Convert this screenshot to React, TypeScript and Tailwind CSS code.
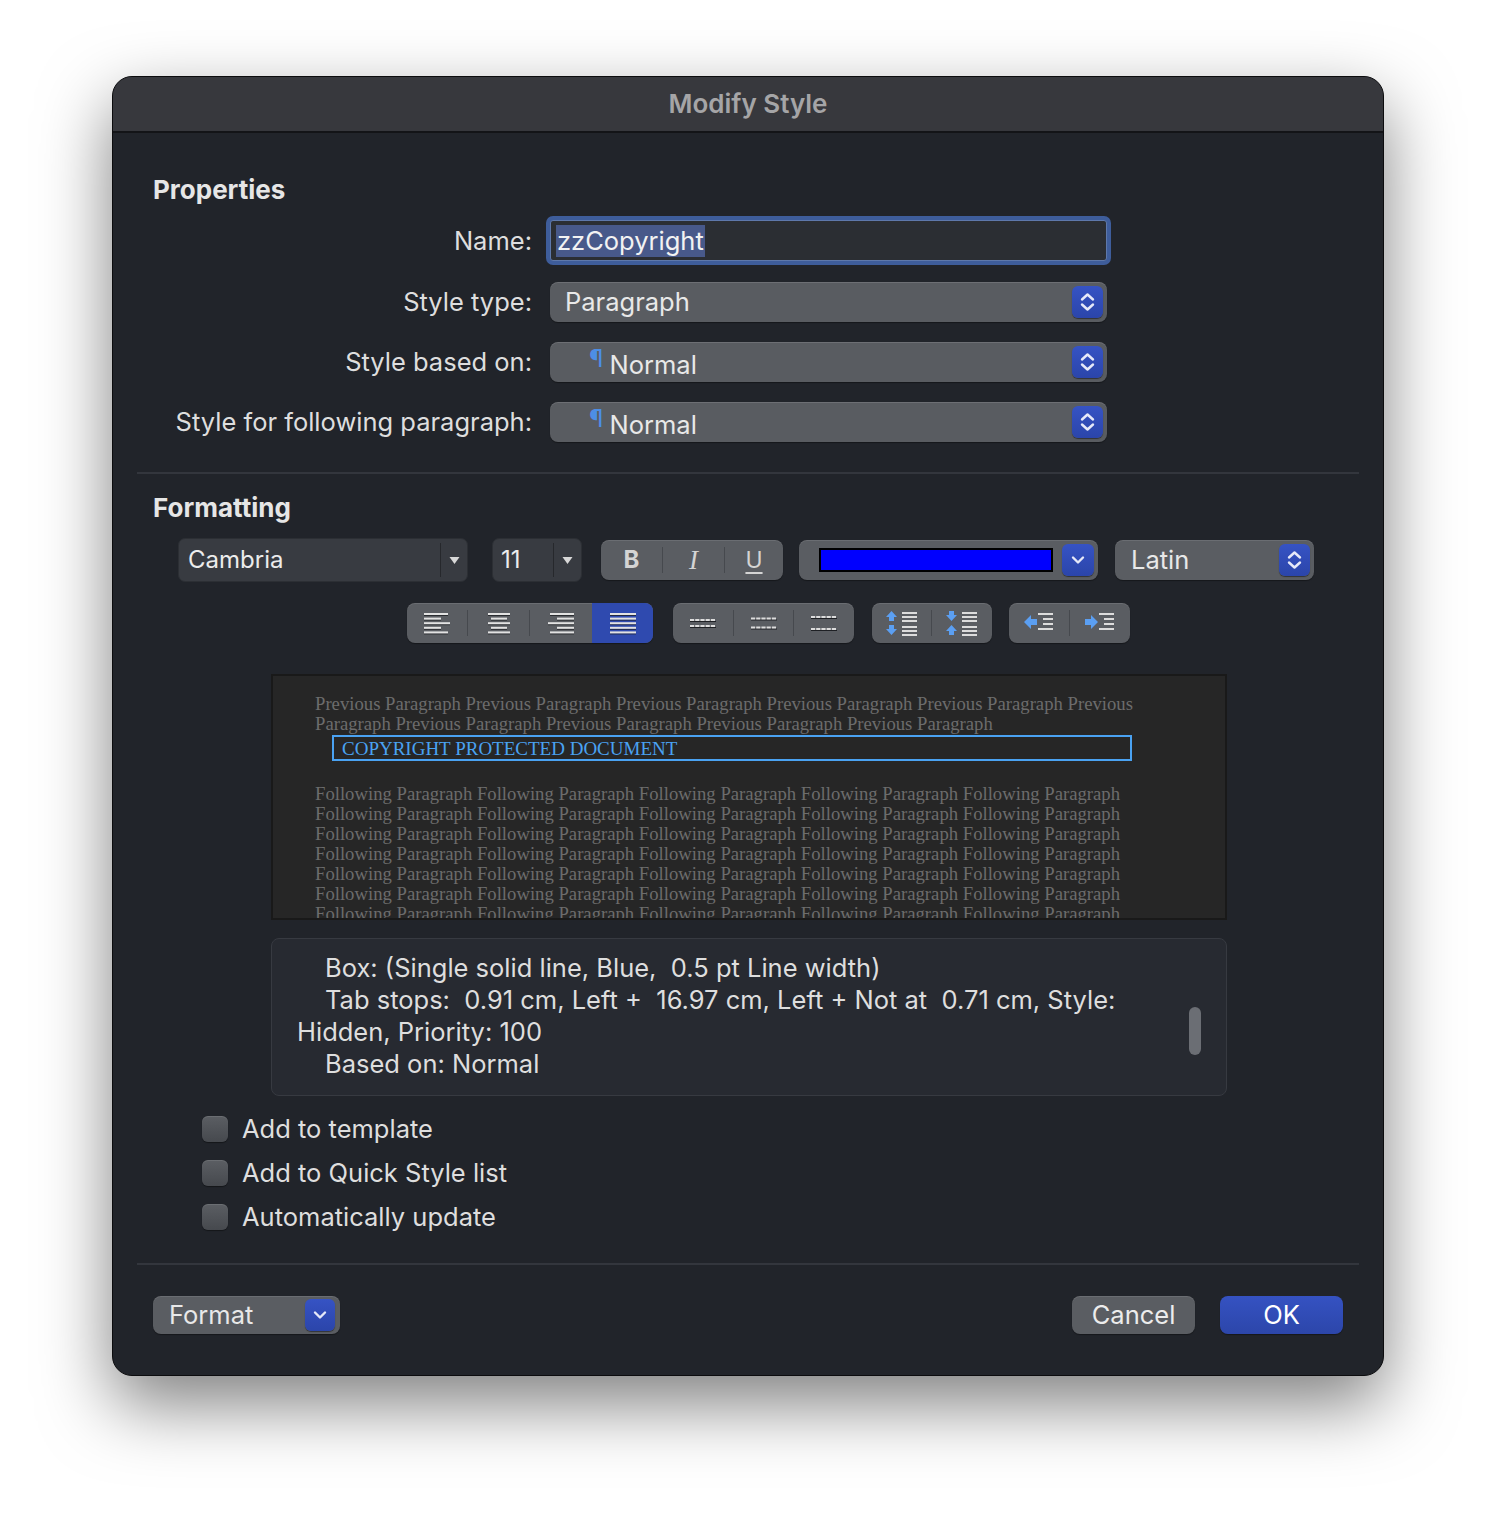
import React from "react";

const sans = "font-['Inter','Noto_Sans',sans-serif]";
const serif = "font-['Liberation_Serif','DejaVu_Serif',serif]";

function Stepper() {
  return (
    <div className="flex h-[32px] w-[31px] shrink-0 items-center justify-center rounded-[6px] bg-gradient-to-b from-[#3653c4] to-[#2b45aa] shadow-[0_1px_1px_rgba(0,0,0,0.45)]">
      <svg width="31" height="32" viewBox="0 0 31 32" fill="none">
        <path d="M10 13.5 L15.5 8.5 L21 13.5" stroke="#e6e9f8" strokeWidth="2.4" strokeLinecap="round" strokeLinejoin="round" />
        <path d="M10 18.5 L15.5 23.5 L21 18.5" stroke="#e6e9f8" strokeWidth="2.4" strokeLinecap="round" strokeLinejoin="round" />
      </svg>
    </div>
  );
}

function DropButton({ w, h }: { w: number; h: number }) {
  return (
    <div
      className="flex shrink-0 items-center justify-center rounded-[6px] bg-gradient-to-b from-[#3653c4] to-[#2b45aa] shadow-[0_1px_1px_rgba(0,0,0,0.45)]"
      style={{ width: w, height: h }}
    >
      <svg width="16" height="12" viewBox="0 0 16 12" fill="none">
        <path d="M3 3.5 L8 8.5 L13 3.5" stroke="#e6e9f8" strokeWidth="2.4" strokeLinecap="round" strokeLinejoin="round" />
      </svg>
    </div>
  );
}

function Pilcrow() {
  return <span className="mr-[6px] mt-[-6px] text-[24px] leading-none text-[#4d8ee6]">¶</span>;
}

function SelectBox({ children }: { children: React.ReactNode }) {
  return (
    <div className="flex h-[40px] w-[557px] items-center justify-between rounded-[8px] bg-[#595c61] pl-[15px] pr-[4px] shadow-[inset_0_1px_0_rgba(255,255,255,0.12),0_1px_1px_rgba(0,0,0,0.35)]">
      <div className="flex items-center text-[25.5px] text-[#e8e8e8]">{children}</div>
      <Stepper />
    </div>
  );
}

function Row({ label, children }: { label: string; children: React.ReactNode }) {
  return (
    <div className="flex items-center">
      <div className="w-[379px] text-right text-[25.5px] leading-[32px] text-[#dedede]">{label}</div>
      <div className="ml-[18px]">{children}</div>
    </div>
  );
}

function Tri() {
  return (
    <svg width="11" height="9" viewBox="0 0 11 9">
      <path d="M0.5 1 L10.5 1 L5.5 8 Z" fill="#d8d8d8" />
    </svg>
  );
}

function Div() {
  return <div className="h-[26px] w-[1px] shrink-0 self-center bg-[#46494e]" />;
}

function Lines({ widths, align }: { widths: number[]; align: "l" | "c" | "r" }) {
  return (
    <svg width="28" height="24" viewBox="0 0 28 24">
      {widths.map((w, i) => {
        const x = align === "l" ? 1 : align === "r" ? 27 - w : (28 - w) / 2;
        const y = 2 + i * 4.6;
        return (
          <g key={i}>
            <rect x={x} y={y + 2} width={w} height={1} fill="#1e2024" opacity="0.8" />
            <rect x={x} y={y} width={w} height={2} fill="#e2e2e2" />
          </g>
        );
      })}
    </svg>
  );
}

function Spacing({ gap }: { gap: number }) {
  const y1 = 12 - gap / 2;
  const y2 = 12 + gap / 2;
  return (
    <svg width="28" height="24" viewBox="0 0 28 24">
      {[y1, y2].map((y, i) => (
        <g key={i}>
          <line x1="1" y1={y + 1.5} x2="27" y2={y + 1.5} stroke="#1e2024" strokeWidth="1" />
          <line x1="1" y1={y} x2="27" y2={y} stroke="#dcdcdc" strokeWidth="2" strokeDasharray="4.2 1" />
        </g>
      ))}
    </svg>
  );
}

function Stack3({ x, y }: { x: number; y: number }) {
  return (
    <g>
      {[0, 4, 8].map((d) => (
        <rect key={d} x={x} y={y + d} width={15} height={2} fill="#dcdcdc" />
      ))}
    </g>
  );
}

function ArrowUp({ x, y }: { x: number; y: number }) {
  return <path d={`M${x} ${y + 6} L${x + 5.5} ${y} L${x + 11} ${y + 6} L${x + 8} ${y + 6} L${x + 8} ${y + 10} L${x + 3} ${y + 10} L${x + 3} ${y + 6} Z`} fill="#5b9ff2" />;
}

function ArrowDown({ x, y }: { x: number; y: number }) {
  return <path d={`M${x} ${y + 4} L${x + 5.5} ${y + 10} L${x + 11} ${y + 4} L${x + 8} ${y + 4} L${x + 8} ${y} L${x + 3} ${y} L${x + 3} ${y + 4} Z`} fill="#5b9ff2" />;
}

function ParaSpace({ before }: { before: boolean }) {
  return (
    <svg width="32" height="28" viewBox="0 0 32 28">
      {before ? <ArrowUp x={0} y={2} /> : <ArrowDown x={0} y={2} />}
      <Stack3 x={16} y={3} />
      {before ? <ArrowDown x={0} y={16} /> : <ArrowUp x={0} y={16} />}
      <Stack3 x={16} y={17} />
    </svg>
  );
}

function Indent({ dir }: { dir: "l" | "r" }) {
  const arrow =
    dir === "l"
      ? "M1 12 L8 5 L8 9 L14 9 L14 15 L8 15 L8 19 Z"
      : "M14 12 L7 5 L7 9 L1 9 L1 15 L7 15 L7 19 Z";
  return (
    <svg width="32" height="26" viewBox="0 0 32 26">
      <path d={arrow} fill="#5b9ff2" />
      <rect x="15" y="3" width="15" height="2" fill="#dcdcdc" />
      <rect x="20" y="8" width="10" height="2" fill="#dcdcdc" />
      <rect x="20" y="13" width="10" height="2" fill="#dcdcdc" />
      <rect x="15" y="18" width="15" height="2" fill="#dcdcdc" />
    </svg>
  );
}

function Seg({ w, children, active }: { w: number; children: React.ReactNode; active?: boolean }) {
  return (
    <div
      className={`flex h-full shrink-0 items-center justify-center ${active ? "bg-[#2f4aaf]" : ""}`}
      style={{ width: w }}
    >
      {children}
    </div>
  );
}

const groupCls =
  "flex h-[40px] overflow-hidden rounded-[8px] bg-[#5a5d62] shadow-[inset_0_1px_0_rgba(255,255,255,0.1),0_1px_1px_rgba(0,0,0,0.35)]";

function Checkbox({ label }: { label: string }) {
  return (
    <div className="flex h-[44px] items-center">
      <div className="h-[26px] w-[26px] rounded-[6px] bg-gradient-to-b from-[#5b5e63] to-[#46494e] shadow-[inset_0_1px_0_rgba(255,255,255,0.1),0_1px_1px_rgba(0,0,0,0.4)]" />
      <span className="ml-[14px] text-[25.5px] leading-[32px] text-[#dedede]">{label}</span>
    </div>
  );
}

const prevLines = [
  "Previous Paragraph Previous Paragraph Previous Paragraph Previous Paragraph Previous Paragraph Previous",
  "Paragraph Previous Paragraph Previous Paragraph Previous Paragraph Previous Paragraph",
];
const follow = "Following Paragraph Following Paragraph Following Paragraph Following Paragraph Following Paragraph";

export default function App() {
  return (
    <div className={`h-[1524px] w-[1496px] bg-white pl-[112px] pt-[76px] ${sans}`}>
      <div className="flex h-[1300px] w-[1272px] flex-col overflow-hidden rounded-[20px] border border-[#0c0c0e] bg-[#21242a] shadow-[0_28px_70px_rgba(0,0,0,0.5)]">
        {/* title bar */}
        <div className="flex h-[56px] shrink-0 items-center justify-center border-b-2 border-[#131417] bg-[#37383d]">
          <span className="mt-[-2px] text-[26px] font-semibold text-[#a5a5a7]">Modify Style</span>
        </div>

        <div className="flex flex-col px-[24px]">
          {/* Properties */}
          <div className="flex flex-col px-[16px] pt-[41px]">
            <div className="text-[26px] font-bold leading-[32px] text-[#e6e6e6]">Properties</div>
            <div className="mt-[14px]">
              <Row label="Name:">
                <div className="flex h-[41px] w-[557px] items-center rounded-[3px] border border-[#5e78ab] bg-[#2b2e33] pl-[5px] shadow-[0_0_0_4px_#3e5d9b]">
                  <span className="bg-[#48598a] px-[1px] text-[25.5px] leading-[32px] text-[#f2f2f2]">zzCopyright</span>
                </div>
              </Row>
            </div>
            <div className="mt-[21px] flex flex-col gap-[20px]">
              <Row label="Style type:">
                <SelectBox>Paragraph</SelectBox>
              </Row>
              <Row label="Style based on:">
                <SelectBox>
                  <span className="ml-[24px]" />
                  <Pilcrow />
                  <span className="mt-[6px]">Normal</span>
                </SelectBox>
              </Row>
              <Row label="Style for following paragraph:">
                <SelectBox>
                  <span className="ml-[24px]" />
                  <Pilcrow />
                  <span className="mt-[6px]">Normal</span>
                </SelectBox>
              </Row>
            </div>
          </div>

          <div className="mt-[30px] h-[2px] bg-[#33363d]" />

          {/* Formatting */}
          <div className="flex flex-col px-[16px] pt-[18px]">
            <div className="text-[26px] font-bold leading-[32px] text-[#e6e6e6]">Formatting</div>

            <div className="mt-[14px] flex items-center pl-[25px]">
              <div className="flex h-[44px] w-[290px] items-center rounded-[7px] border border-[#2c2f34] bg-[#383b41]">
                <span className="flex-1 pl-[9px] text-[24px] text-[#ececec]">Cambria</span>
                <div className="h-[34px] w-[1px] bg-[#26282c]" />
                <div className="flex w-[26px] items-center justify-center"><Tri /></div>
              </div>
              <div className="ml-[24px] flex h-[44px] w-[90px] items-center rounded-[7px] border border-[#2c2f34] bg-[#383b41]">
                <span className="flex-1 pl-[8px] text-[24px] text-[#ececec]">11</span>
                <div className="h-[34px] w-[1px] bg-[#26282c]" />
                <div className="flex w-[27px] items-center justify-center"><Tri /></div>
              </div>
              <div className={`ml-[19px] ${groupCls}`}>
                <Seg w={61}><span className="text-[24px] font-bold text-[#d4d4d4]">B</span></Seg>
                <Div />
                <Seg w={61}><span className={`${serif} text-[27px] italic text-[#d4d4d4]`}>I</span></Seg>
                <Div />
                <Seg w={58}><span className="text-[23px] text-[#d4d4d4] underline decoration-2 underline-offset-4">U</span></Seg>
              </div>
              <div className={`ml-[16px] w-[299px] items-center pl-[20px] pr-[4px] ${groupCls}`}>
                <div className="h-[24px] w-[234px] border-2 border-black bg-[#0000ff]" />
                <div className="ml-[9px]"><DropButton w={32} h={32} /></div>
              </div>
              <div className={`ml-[17px] w-[199px] items-center justify-between pl-[16px] pr-[4px] ${groupCls}`}>
                <span className="text-[25.5px] text-[#e8e8e8]">Latin</span>
                <Stepper />
              </div>
            </div>

            <div className="mt-[21px] flex items-center pl-[254px]">
              <div className={groupCls}>
                <Seg w={60}><Lines widths={[24, 17, 26, 17, 24]} align="l" /></Seg>
                <Div />
                <Seg w={61}><Lines widths={[22, 16, 22, 16, 22]} align="c" /></Seg>
                <Div />
                <Seg w={62}><Lines widths={[24, 17, 26, 17, 24]} align="r" /></Seg>
                <Seg w={61} active><Lines widths={[26, 26, 26, 26, 26]} align="l" /></Seg>
              </div>
              <div className={`ml-[20px] ${groupCls}`}>
                <Seg w={60}><Spacing gap={6} /></Seg>
                <Div />
                <Seg w={59}><Spacing gap={9} /></Seg>
                <Div />
                <Seg w={60}><Spacing gap={12} /></Seg>
              </div>
              <div className={`ml-[18px] ${groupCls}`}>
                <Seg w={59}><ParaSpace before /></Seg>
                <Div />
                <Seg w={60}><ParaSpace before={false} /></Seg>
              </div>
              <div className={`ml-[17px] ${groupCls}`}>
                <Seg w={60}><Indent dir="l" /></Seg>
                <Div />
                <Seg w={60}><Indent dir="r" /></Seg>
              </div>
            </div>

            {/* preview */}
            <div className={`ml-[118px] mt-[31px] h-[246px] w-[956px] overflow-hidden border-2 border-[#191919] bg-[#262626] pl-[42px] pt-[18px] ${serif}`}>
              {prevLines.map((l) => (
                <div key={l} className="whitespace-nowrap text-[18.7px] leading-[20px] text-[#6c6c6c]">{l}</div>
              ))}
              <div className="ml-[17px] mt-[1px] flex h-[26px] w-[800px] items-center border-2 border-[#4aa2f2] pl-[8px]">
                <span className="text-[19px] leading-none text-[#4aa2f2]">COPYRIGHT PROTECTED DOCUMENT</span>
              </div>
              <div className="mt-[23px]">
                {Array.from({ length: 7 }).map((_, i) => (
                  <div key={i} className="whitespace-nowrap text-[18.7px] leading-[20px] text-[#6c6c6c]">{follow}</div>
                ))}
              </div>
            </div>

            {/* description */}
            <div className="ml-[118px] mt-[18px] flex h-[158px] w-[956px] rounded-[8px] border border-[#373a41] bg-[#272a31]">
              <div className="flex-1 pl-[25px] pt-[13px] text-[25.5px] leading-[32px] text-[#dedede]">
                <div className="whitespace-pre pl-[28px]">Box: (Single solid line, Blue,  0.5 pt Line width)</div>
                <div className="whitespace-pre pl-[28px]">Tab stops:  0.91 cm, Left +  16.97 cm, Left + Not at  0.71 cm, Style:</div>
                <div className="whitespace-pre">Hidden, Priority: 100</div>
                <div className="whitespace-pre pl-[28px]">Based on: Normal</div>
              </div>
              <div className="pr-[25px] pt-[68px]">
                <div className="h-[48px] w-[12px] rounded-full bg-[#6b6e74]" />
              </div>
            </div>

            {/* checkboxes */}
            <div className="mt-[11px] flex flex-col pl-[49px]">
              <Checkbox label="Add to template" />
              <Checkbox label="Add to Quick Style list" />
              <Checkbox label="Automatically update" />
            </div>
          </div>

          <div className="mt-[24px] h-[2px] bg-[#33363d]" />

          {/* buttons */}
          <div className="mt-[31px] flex items-center justify-between px-[16px]">
            <div className="flex h-[38px] w-[187px] items-center justify-between overflow-hidden rounded-[8px] bg-[#5a5d62] pl-[16px] pr-[5px] shadow-[inset_0_1px_0_rgba(255,255,255,0.1),0_1px_1px_rgba(0,0,0,0.35)]">
              <span className="text-[25.5px] text-[#e8e8e8]">Format</span>
              <DropButton w={30} h={32} />
            </div>
            <div className="flex items-center gap-[25px]">
              <div className="flex h-[38px] w-[123px] items-center justify-center rounded-[8px] bg-[#5a5d62] text-[25.5px] text-[#ececec] shadow-[inset_0_1px_0_rgba(255,255,255,0.1),0_1px_1px_rgba(0,0,0,0.35)]">Cancel</div>
              <div className="flex h-[38px] w-[123px] items-center justify-center rounded-[8px] bg-gradient-to-b from-[#3552c2] to-[#2c46aa] text-[25.5px] text-white shadow-[0_1px_1px_rgba(0,0,0,0.35)]">OK</div>
            </div>
          </div>
        </div>
      </div>
    </div>
  );
}
